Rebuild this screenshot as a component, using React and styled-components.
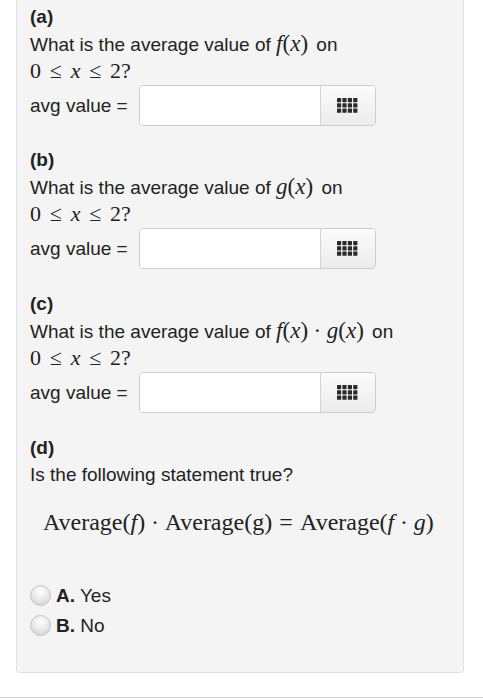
import React from "react";
import styled, { createGlobalStyle } from "styled-components";

const GlobalStyle = createGlobalStyle`
  html, body {
    margin: 0;
    padding: 0;
    background: #fff;
  }
  body {
    font-family: "Liberation Sans", Arial, sans-serif;
    color: #222;
  }
`;

const Page = styled.div`
  width: 483px;
  height: 700px;
  overflow: hidden;
`;

const Panel = styled.div`
  box-sizing: border-box;
  margin-left: 16px;
  width: 448px;
  height: 673px;
  padding-left: 13px;
  background: #f4f4f4;
  border: 1px solid #e0e0e0;
  border-top: none;
  border-radius: 0 0 4px 4px;
`;

const Rule = styled.div`
  margin-top: 24px;
  height: 1px;
  background: #cfcfcf;
`;

const Section = styled.div`
  padding-top: 4px;
  height: ${(p) => p.h || 144}px;
  box-sizing: border-box;
`;

const Label = styled.div`
  font-weight: bold;
  font-size: 19px;
  line-height: 26px;
`;

const Question = styled.div`
  font-size: 19px;
  line-height: 28px;
  white-space: nowrap;
`;

const MathLine = styled.div`
  font-family: "Liberation Serif", "Times New Roman", serif;
  font-size: 22px;
  line-height: 24px;
`;

const Rel = styled.span`
  margin: 0 ${(p) => p.space || 0.4}em;
`;

const MathRun = styled.span`
  font-family: "Liberation Serif", "Times New Roman", serif;
  font-size: 23px;
  margin-right: 3px;
`;

const V = styled.span`
  font-style: ${(p) => (p.upright ? "normal" : "italic")};
`;

const AnswerRow = styled.div`
  margin-top: 2px;
  display: flex;
  align-items: center;
  gap: 11px;
  font-size: 19px;
`;

const InputGroup = styled.div`
  display: flex;
  width: 237px;
  height: 41px;
  box-sizing: border-box;
  border: 1px solid #cdcdcd;
  border-radius: 4px;
  overflow: hidden;
  background: #fff;
`;

const Field = styled.div`
  flex: 1;
  background: #fff;
`;

const KeyButton = styled.div`
  width: 54px;
  border-left: 1px solid #d4d4d4;
  background: linear-gradient(#fbfbfb, #ececec);
  display: flex;
  align-items: center;
  justify-content: center;
`;

const Formula = styled.div`
  margin: 18px 0 0 13px;
  font-family: "Liberation Serif", "Times New Roman", serif;
  font-size: 24px;
  line-height: 30px;
  white-space: nowrap;
`;

const Choices = styled.div`
  margin-top: 48px;
  display: flex;
  flex-direction: column;
  gap: 9px;
`;

const Choice = styled.div`
  display: flex;
  align-items: center;
  gap: 5px;
  font-size: 19px;
  line-height: 21px;
`;

const Radio = styled.span`
  width: 21px;
  height: 21px;
  box-sizing: border-box;
  border-radius: 50%;
  border: 1px solid #c4c4c4;
  background: radial-gradient(circle at 50% 30%, #ffffff 0%, #e6e6e6 55%, #cccccc 100%);
`;

const GridIcon = () => (
  <svg width="21" height="15" viewBox="0 0 21 15">
    {[0, 1, 2].map((r) =>
      [0, 1, 2, 3].map((c) => (
        <rect
          key={`${r}-${c}`}
          x={c * 5.4}
          y={r * 5.3}
          width="4.2"
          height="4.2"
          rx="0.6"
          fill="#2a2a2a"
        />
      ))
    )}
  </svg>
);

const Answer = () => (
  <AnswerRow>
    <span>avg value =</span>
    <InputGroup>
      <Field />
      <KeyButton>
        <GridIcon />
      </KeyButton>
    </InputGroup>
  </AnswerRow>
);

const Interval = () => (
  <MathLine>
    0<Rel>≤</Rel>
    <V>x</V>
    <Rel>≤</Rel>2?
  </MathLine>
);

const Fx = ({ name }) => (
  <>
    <V>{name}</V>(<V>x</V>)
  </>
);

export default function App() {
  return (
    <>
      <GlobalStyle />
      <Page>
        <Panel>
          <Section h={143}>
            <Label>(a)</Label>
            <Question>
              What is the average value of{" "}
              <MathRun>
                <Fx name="f" />
              </MathRun>{" "}
              on
            </Question>
            <Interval />
            <Answer />
          </Section>
          <Section h={144}>
            <Label>(b)</Label>
            <Question>
              What is the average value of{" "}
              <MathRun>
                <Fx name="g" />
              </MathRun>{" "}
              on
            </Question>
            <Interval />
            <Answer />
          </Section>
          <Section h={144}>
            <Label>(c)</Label>
            <Question>
              What is the average value of{" "}
              <MathRun>
                <Fx name="f" />
                <Rel space={0.24}>·</Rel>
                <Fx name="g" />
              </MathRun>{" "}
              on
            </Question>
            <Interval />
            <Answer />
          </Section>
          <Section h={242}>
            <Label>(d)</Label>
            <Question>Is the following statement true?</Question>
            <Formula>
              Average(<V>f</V>)<Rel space={0.24}>·</Rel>Average(g)
              <Rel space={0.3}>=</Rel>Average(<V>f</V>
              <Rel space={0.24}>·</Rel>
              <V>g</V>)
            </Formula>
            <Choices>
              <Choice>
                <Radio />
                <span>
                  <b>A.</b> Yes
                </span>
              </Choice>
              <Choice>
                <Radio />
                <span>
                  <b>B.</b> No
                </span>
              </Choice>
            </Choices>
          </Section>
        </Panel>
        <Rule />
      </Page>
    </>
  );
}
